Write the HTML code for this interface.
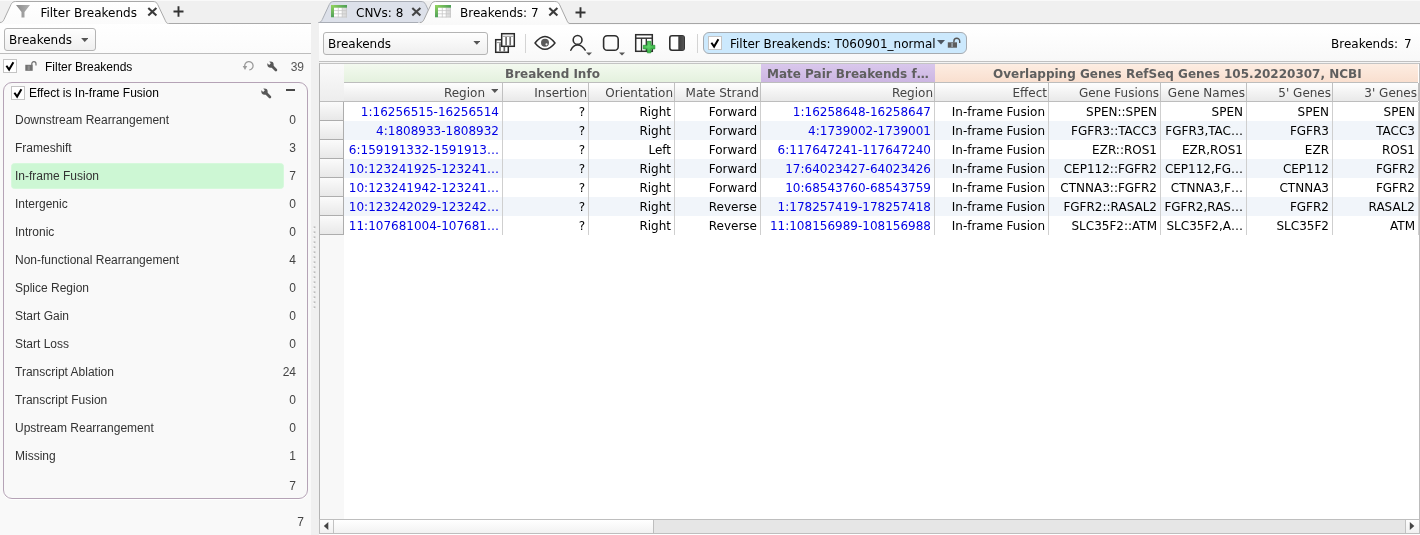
<!DOCTYPE html>
<html>
<head>
<meta charset="utf-8">
<title>Filter Breakends</title>
<style>
html,body{margin:0;padding:0;}
body{width:1420px;height:535px;overflow:hidden;position:relative;background:#f0f0f0;
 font-family:"DejaVu Sans","Liberation Sans",sans-serif;font-size:12px;color:#000;}
.a{position:absolute;white-space:nowrap;}
.lib{font-family:"Liberation Sans",sans-serif;}
.t{position:absolute;white-space:nowrap;line-height:16px;height:16px;}
/* left panel */
#lp{left:0;top:23px;width:311px;height:512px;background:#f9f9f9;}
#lptop{left:0;top:23px;width:311px;height:30px;background:linear-gradient(#ffffff,#fbfbfb);}
.li{left:15px;color:#333;font-family:"Liberation Sans",sans-serif;}
.ln{right:1124px;color:#444;font-family:"Liberation Sans",sans-serif;text-align:right;}
/* table */
.hc{position:absolute;top:85px;height:16px;line-height:17px;text-align:right;color:#444;box-sizing:border-box;white-space:nowrap;overflow:hidden;}
.gt{font-weight:bold;color:#5f5f5f;}
.row{position:absolute;left:344px;width:1074px;height:19px;}
.row.alt{background:#f1f5fa;}
.c{position:absolute;top:1px;height:18px;line-height:19px;text-align:right;white-space:nowrap;overflow:hidden;box-sizing:border-box;padding-right:3px;}
.lnk{color:#0000e6;}
.vl{position:absolute;top:102px;height:133px;width:1px;background:#cfcfcf;}
.rh{position:absolute;left:320px;width:23px;height:18px;background:linear-gradient(#fbfbfb,#e8e8e8);border-right:1px solid #adadad;border-bottom:1px solid #adadad;box-sizing:content-box;}
</style>
</head>
<body>
<div id="all" style="position:absolute;left:0;top:0;width:1420px;height:535px;will-change:transform;">
<!-- ================= LEFT PANEL ================= -->
<div class="a" id="lp"></div>
<div class="a" id="lptop"></div>
<!-- left tab bar -->
<svg class="a" style="left:0;top:0" width="320" height="24" viewBox="0 0 320 24">
 <defs><linearGradient id="tg" x1="0" y1="0" x2="0" y2="1"><stop offset="0" stop-color="#ffffff"/><stop offset="1" stop-color="#fbfbfb"/></linearGradient></defs>
 <path d="M0 22.5 C2 22.5 3 21.5 4 19.5 L11 4.5 C12 2.5 13.2 1.5 15.7 1.5 L153 1.5 C155.5 1.5 156.7 2.5 157.7 4.5 L165.3 20.5 C166.2 22.5 166.8 23.5 168.5 23.5 L311 23.5 L311 24 L0 24 Z" fill="url(#tg)"/>
 <path d="M0 22.5 C2 22.5 3 21.5 4 19.5 L11 4.5 C12 2.5 13.2 1.5 15.7 1.5 L153 1.5 C155.5 1.5 156.7 2.5 157.7 4.5 L165.3 20.5 C166.2 22.5 166.8 23.5 168.5 23.5 L311 23.5" fill="none" stroke="#a9a9a9" stroke-width="1"/>
 <!-- funnel icon -->
 <defs><linearGradient id="fg" x1="0" y1="0" x2="1" y2="0"><stop offset="0" stop-color="#8a8a8a"/><stop offset="1" stop-color="#b4b4b4"/></linearGradient></defs>
 <path d="M16 5 L30 5 L24.5 12 L24.5 17.5 L21.5 17.5 L21.5 12 Z" fill="url(#fg)"/>
</svg>
<div class="t" style="left:40.4px;top:5px;">Filter Breakends</div>
<svg class="a" style="left:146.6px;top:7.3px" width="11" height="10" viewBox="0 0 11 10"><path d="M1.3 1.1 L9.4 8.6 M9.4 1.1 L1.3 8.6" stroke="#3a3a3a" stroke-width="2.1" fill="none"/></svg>
<svg class="a" style="left:173.4px;top:6.4px" width="11" height="11" viewBox="0 0 11 11"><path d="M5.5 0.3 V10.7 M0.5 5.5 H10.5" stroke="#333" stroke-width="1.9" fill="none"/></svg>

<!-- Breakends dropdown button -->
<div class="a" style="left:4px;top:28px;width:92px;height:23px;box-sizing:border-box;border:1px solid #b4b4b4;border-radius:3px;background:linear-gradient(#fefefe,#efefef);"></div>
<div class="t" style="left:9px;top:32px;">Breakends</div>
<svg class="a" style="left:80.5px;top:37.5px" width="7.5" height="4.5" viewBox="0 0 8 5"><path d="M0 0 H8 L4 4.5 Z" fill="#555"/></svg>
<div class="a" style="left:0;top:53px;width:311px;height:1px;background:#bdbdbd;"></div>

<!-- Filter Breakends row -->
<div class="a" style="left:3px;top:59px;width:14px;height:14px;box-sizing:border-box;border:1px solid #c4c4c4;background:#fff;"></div>
<svg class="a" style="left:3px;top:59px" width="14" height="14" viewBox="0 0 14 14"><path d="M3.4 6.7 L6.1 10.6 L10.4 3.3" stroke="#000" stroke-width="2" fill="none"/></svg>
<svg class="a" style="left:24px;top:60px" width="14" height="12" viewBox="0 0 14 12"><rect x="1.3" y="4.8" width="7.4" height="6" fill="#707070"/><rect x="3.6" y="5.6" width="2.2" height="4.6" fill="#8e8e8e"/><path d="M7.8 5 V3.8 C7.8 0.9 12 0.9 12 3.8 V5.6" stroke="#707070" stroke-width="1.2" fill="none"/></svg>
<div class="t lib" style="left:45px;top:59px;color:#000;">Filter Breakends</div>
<svg class="a" style="left:241px;top:59px" width="14" height="14" viewBox="241 59 14 14"><path d="M244.7 66.2 A4.2 4.2 0 1 1 249.3 69.95" stroke="#9a9a9a" stroke-width="1.3" fill="none"/><path d="M242.7 66 H247.2 L245 69.9 Z" fill="#9a9a9a"/></svg>
<svg class="a" style="left:267px;top:61px" width="12" height="12" viewBox="0 0 12 12"><path d="M4.2 4.3 L8.9 9.0" stroke="#585858" stroke-width="2.7" stroke-linecap="round" fill="none"/><circle cx="3.5" cy="3.6" r="3.15" fill="#585858"/><path d="M3.0 3.1 L-1 -0.9" stroke="#f9f9f9" stroke-width="2.3" fill="none"/></svg>
<div class="t lib" style="left:280px;width:24px;text-align:right;top:59px;color:#555;">39</div>

<!-- card -->
<div class="a" style="left:3px;top:82px;width:305px;height:417px;box-sizing:border-box;border:1px solid #b5a3b6;border-radius:9px;background:#f9f9f9;box-shadow:0 1px 0 #fff;"></div>
<div class="a" style="left:11px;top:86px;width:14px;height:14px;box-sizing:border-box;border:1px solid #c4c4c4;background:#fff;"></div>
<svg class="a" style="left:11px;top:86px" width="14" height="14" viewBox="0 0 14 14"><path d="M3.4 6.7 L6.1 10.6 L10.4 3.3" stroke="#000" stroke-width="2" fill="none"/></svg>
<div class="t lib" style="left:29px;top:85px;">Effect is In-frame Fusion</div>
<svg class="a" style="left:260.8px;top:88px" width="12" height="12" viewBox="0 0 12 12"><path d="M4.2 4.3 L8.9 9.0" stroke="#585858" stroke-width="2.7" stroke-linecap="round" fill="none"/><circle cx="3.5" cy="3.6" r="3.15" fill="#585858"/><path d="M3.0 3.1 L-1 -0.9" stroke="#f9f9f9" stroke-width="2.3" fill="none"/></svg>
<div class="a" style="left:285.5px;top:88.5px;width:9px;height:2px;background:#484848;"></div>

<div class="a" style="left:11px;top:163px;width:273px;height:25.5px;box-sizing:border-box;background:#cdf7d4;border:1px solid #d6f9dc;border-radius:3.5px;"></div>
<div class="t li" style="top:112px;">Downstream Rearrangement</div><div class="t ln" style="top:112px;">0</div>
<div class="t li" style="top:140px;">Frameshift</div><div class="t ln" style="top:140px;">3</div>
<div class="t li" style="top:168px;">In-frame Fusion</div><div class="t ln" style="top:168px;">7</div>
<div class="t li" style="top:196px;">Intergenic</div><div class="t ln" style="top:196px;">0</div>
<div class="t li" style="top:224px;">Intronic</div><div class="t ln" style="top:224px;">0</div>
<div class="t li" style="top:252px;">Non-functional Rearrangement</div><div class="t ln" style="top:252px;">4</div>
<div class="t li" style="top:280px;">Splice Region</div><div class="t ln" style="top:280px;">0</div>
<div class="t li" style="top:308px;">Start Gain</div><div class="t ln" style="top:308px;">0</div>
<div class="t li" style="top:336px;">Start Loss</div><div class="t ln" style="top:336px;">0</div>
<div class="t li" style="top:364px;">Transcript Ablation</div><div class="t ln" style="top:364px;">24</div>
<div class="t li" style="top:392px;">Transcript Fusion</div><div class="t ln" style="top:392px;">0</div>
<div class="t li" style="top:420px;">Upstream Rearrangement</div><div class="t ln" style="top:420px;">0</div>
<div class="t li" style="top:448px;">Missing</div><div class="t ln" style="top:448px;">1</div>
<div class="t ln" style="top:478px;">7</div>
<div class="t ln" style="top:514px;right:1116px;">7</div>

<!-- splitter -->
<div class="a" style="left:311px;top:0;width:8px;height:535px;background:#f0f0f0;"></div>
<div class="a" style="left:0;top:0;width:1420px;height:1px;background:#f9f9f9;"></div>
<div class="a" style="left:319px;top:534px;width:1101px;height:1px;background:#f4f4f4;"></div>
<svg class="a" style="left:312px;top:226px" width="6" height="86" viewBox="0 0 6 86"><rect x="1" y="1" width="2" height="2" fill="#fff"/><rect x="1.6" y="0.4" width="1.8" height="1.8" fill="#bcbcbc"/><rect x="1" y="6" width="2" height="2" fill="#fff"/><rect x="1.6" y="5.4" width="1.8" height="1.8" fill="#bcbcbc"/><rect x="1" y="11" width="2" height="2" fill="#fff"/><rect x="1.6" y="10.4" width="1.8" height="1.8" fill="#bcbcbc"/><rect x="1" y="16" width="2" height="2" fill="#fff"/><rect x="1.6" y="15.4" width="1.8" height="1.8" fill="#bcbcbc"/><rect x="1" y="21" width="2" height="2" fill="#fff"/><rect x="1.6" y="20.4" width="1.8" height="1.8" fill="#bcbcbc"/><rect x="1" y="26" width="2" height="2" fill="#fff"/><rect x="1.6" y="25.4" width="1.8" height="1.8" fill="#bcbcbc"/><rect x="1" y="31" width="2" height="2" fill="#fff"/><rect x="1.6" y="30.4" width="1.8" height="1.8" fill="#bcbcbc"/><rect x="1" y="36" width="2" height="2" fill="#fff"/><rect x="1.6" y="35.4" width="1.8" height="1.8" fill="#bcbcbc"/><rect x="1" y="41" width="2" height="2" fill="#fff"/><rect x="1.6" y="40.4" width="1.8" height="1.8" fill="#bcbcbc"/><rect x="1" y="46" width="2" height="2" fill="#fff"/><rect x="1.6" y="45.4" width="1.8" height="1.8" fill="#bcbcbc"/><rect x="1" y="51" width="2" height="2" fill="#fff"/><rect x="1.6" y="50.4" width="1.8" height="1.8" fill="#bcbcbc"/><rect x="1" y="56" width="2" height="2" fill="#fff"/><rect x="1.6" y="55.4" width="1.8" height="1.8" fill="#bcbcbc"/><rect x="1" y="61" width="2" height="2" fill="#fff"/><rect x="1.6" y="60.4" width="1.8" height="1.8" fill="#bcbcbc"/><rect x="1" y="66" width="2" height="2" fill="#fff"/><rect x="1.6" y="65.4" width="1.8" height="1.8" fill="#bcbcbc"/><rect x="1" y="71" width="2" height="2" fill="#fff"/><rect x="1.6" y="70.4" width="1.8" height="1.8" fill="#bcbcbc"/><rect x="1" y="76" width="2" height="2" fill="#fff"/><rect x="1.6" y="75.4" width="1.8" height="1.8" fill="#bcbcbc"/><rect x="1" y="81" width="2" height="2" fill="#fff"/><rect x="1.6" y="80.4" width="1.8" height="1.8" fill="#bcbcbc"/></svg>

<!-- ================= RIGHT PANEL ================= -->
<div class="a" id="rp" style="left:319px;top:23px;width:1101px;height:512px;background:#fff;"></div>
<div class="a" style="left:319px;top:24px;width:1101px;height:37px;background:linear-gradient(#ffffff 15%,#f8f8f8);"></div>

<!-- right tab bar -->
<svg class="a" style="left:311px;top:0" width="1109" height="25" viewBox="311 0 1109 25">
 <defs><linearGradient id="tg2" x1="0" y1="0" x2="0" y2="1"><stop offset="0" stop-color="#ffffff"/><stop offset="1" stop-color="#f9f9f9"/></linearGradient></defs>
 <path d="M318.5 22.5 C320.5 22.5 321.3 21.5 322.3 19.5 L329.3 4.5 C330.3 2.5 331.5 1.5 334 1.5 L421 1.5 C423.5 1.5 424.7 2.5 425.7 4.5 L434 22.5 Z" fill="#dde1ea" stroke="#a9adb5" stroke-width="1"/>
 <path d="M418 25 L418 22.5 L420 22.5 C422 22.5 423 21.5 424 19.5 L431 4.5 C432 2.5 433.2 1.5 435.7 1.5 L554.8 1.5 C557.3 1.5 558.5 2.5 559.5 4.5 L566.9 20.5 C567.8 22.5 568.4 23.5 570 23.5 L1420 23.5 L1420 25 Z" fill="url(#tg2)"/>
 <path d="M420 22.5 C422 22.5 423 21.5 424 19.5 L431 4.5 C432 2.5 433.2 1.5 435.7 1.5 L554.8 1.5 C557.3 1.5 558.5 2.5 559.5 4.5 L566.9 20.5 C567.8 22.5 568.4 23.5 570 23.5 L1420 23.5" fill="none" stroke="#a6a6a6" stroke-width="1"/>
</svg>
<!-- table icons -->
<svg class="a" style="left:331px;top:5px" width="16" height="13" viewBox="0 0 16 13"><defs><linearGradient id="ih" x1="0" y1="0" x2="1" y2="0"><stop offset="0" stop-color="#93d45e"/><stop offset="1" stop-color="#4d9e55"/></linearGradient><linearGradient id="iv" x1="0" y1="0" x2="0" y2="1"><stop offset="0" stop-color="#93d45e"/><stop offset="1" stop-color="#4fa05a"/></linearGradient><linearGradient id="is" x1="0" y1="0" x2="1" y2="0"><stop offset="0" stop-color="#fff"/><stop offset="1" stop-color="#d6d6d6"/></linearGradient></defs><rect x="0" y="0" width="16" height="12.3" fill="url(#is)"/><rect x="3" y="2.6" width="8" height="9.4" fill="#fff"/><path d="M7.3 2.6 V12.3 M11.2 2.6 V12.3 M15.6 2.6 V12.3 M3 5.6 H16 M3 8.8 H16 M3 12 H16" stroke="#c6c6c6" stroke-width="0.8" fill="none"/><rect x="0" y="0" width="16" height="2.7" fill="url(#ih)"/><rect x="0" y="0" width="3" height="12.3" fill="url(#iv)"/></svg>
<div class="t" style="left:356px;top:5px;">CNVs: 8</div>
<svg class="a" style="left:410.6px;top:7.3px" width="11" height="10" viewBox="0 0 11 10"><path d="M1.3 1.1 L9.4 8.6 M9.4 1.1 L1.3 8.6" stroke="#444" stroke-width="2.1" fill="none"/></svg>
<svg class="a" style="left:435px;top:5px" width="16" height="13" viewBox="0 0 16 13"><defs><linearGradient id="ih" x1="0" y1="0" x2="1" y2="0"><stop offset="0" stop-color="#93d45e"/><stop offset="1" stop-color="#4d9e55"/></linearGradient><linearGradient id="iv" x1="0" y1="0" x2="0" y2="1"><stop offset="0" stop-color="#93d45e"/><stop offset="1" stop-color="#4fa05a"/></linearGradient><linearGradient id="is" x1="0" y1="0" x2="1" y2="0"><stop offset="0" stop-color="#fff"/><stop offset="1" stop-color="#d6d6d6"/></linearGradient></defs><rect x="0" y="0" width="16" height="12.3" fill="url(#is)"/><rect x="3" y="2.6" width="8" height="9.4" fill="#fff"/><path d="M7.3 2.6 V12.3 M11.2 2.6 V12.3 M15.6 2.6 V12.3 M3 5.6 H16 M3 8.8 H16 M3 12 H16" stroke="#c6c6c6" stroke-width="0.8" fill="none"/><rect x="0" y="0" width="16" height="2.7" fill="url(#ih)"/><rect x="0" y="0" width="3" height="12.3" fill="url(#iv)"/></svg>
<div class="t" style="left:460px;top:5px;">Breakends: 7</div>
<svg class="a" style="left:547.6px;top:7.3px" width="11" height="10" viewBox="0 0 11 10"><path d="M1.3 1.1 L9.4 8.6 M9.4 1.1 L1.3 8.6" stroke="#3a3a3a" stroke-width="2.1" fill="none"/></svg>
<svg class="a" style="left:574.6px;top:6.5px" width="11" height="11" viewBox="0 0 11 11"><path d="M5.5 0.3 V10.7 M0.5 5.5 H10.5" stroke="#333" stroke-width="1.9" fill="none"/></svg>

<!-- toolbar -->
<div class="a" style="left:323px;top:32px;width:165px;height:23px;box-sizing:border-box;border:1px solid #b4b4b4;border-radius:3px;background:linear-gradient(#fefefe,#efefef);"></div>
<div class="t" style="left:328px;top:36px;">Breakends</div>
<svg class="a" style="left:472.8px;top:41.2px" width="7.6" height="4.3" viewBox="0 0 8 5"><path d="M0 0 H8 L4 4.5 Z" fill="#555"/></svg>
<!-- TOOLBAR ICONS -->
<!-- stacked tables icon -->
<svg class="a" style="left:494px;top:32px" width="22" height="22" viewBox="494 32 22 22">
 <rect x="495.7" y="39.7" width="12.6" height="12.6" fill="#fff" stroke="#2a2a2a" stroke-width="1.5"/>
 <path d="M496.4 42.6 H507.6" stroke="#8a8a8a" stroke-width="0.9"/>
 <path d="M500 43.2 V51.6 M504.3 43.2 V51.6" stroke="#6a6a6a" stroke-width="1.7"/>
 <rect x="501.7" y="33.7" width="12.6" height="12.6" fill="#fff" stroke="#2a2a2a" stroke-width="1.5"/>
 <path d="M502.4 36.3 H513.6" stroke="#8a8a8a" stroke-width="0.9"/>
 <path d="M506.1 37 V45.6 M510.2 37 V45.6" stroke="#6e6e6e" stroke-width="1.7"/>
</svg>
<div class="a" style="left:525px;top:34px;width:1px;height:19px;background:#d4d4d4;"></div>
<!-- eye icon -->
<svg class="a" style="left:532px;top:33px" width="26" height="20" viewBox="532 33 26 20">
 <path d="M535 43 C539 37.8 542 36.4 545 36.4 C548 36.4 551 37.8 555 43 C551 48 548 49.3 545 49.3 C542 49.3 539 48 535 43 Z" fill="#fff" stroke="#2e2e2e" stroke-width="1.5" stroke-linejoin="round"/>
 <circle cx="545" cy="42.8" r="4" fill="#5a5a5a"/>
 <circle cx="546.5" cy="44.3" r="1.1" fill="#f0f0f0"/>
</svg>
<!-- person icon -->
<svg class="a" style="left:568px;top:33px" width="26" height="24" viewBox="568 33 26 24">
 <circle cx="577.6" cy="39.9" r="4.4" fill="none" stroke="#2e2e2e" stroke-width="1.6"/>
 <path d="M570.8 50.2 C572.5 46.2 575 44.9 577.5 44.9 C580 44.9 583 46.2 585.2 50.2" fill="none" stroke="#2e2e2e" stroke-width="1.5" stroke-linecap="round"/>
 <path d="M586 52.4 H592 L589 55.4 Z" fill="#555"/>
</svg>
<!-- rounded square icon -->
<svg class="a" style="left:601px;top:33px" width="26" height="24" viewBox="601 33 26 24">
 <rect x="603.6" y="35.7" width="14.6" height="14.6" rx="3.6" fill="none" stroke="#2e2e2e" stroke-width="1.6"/>
 <path d="M619 52.4 H625 L622 55.4 Z" fill="#555"/>
</svg>
<!-- table plus icon -->
<svg class="a" style="left:633px;top:32px" width="24" height="23" viewBox="633 32 24 23">
 <rect x="635.7" y="34.7" width="16.6" height="16.6" fill="#fff" stroke="#2e2e2e" stroke-width="1.5"/>
 <path d="M636 38.2 H652" stroke="#2e2e2e" stroke-width="1.4"/>
 <path d="M641.5 38.5 V51 M646.3 38.5 V51" stroke="#2e2e2e" stroke-width="1.3"/>
 <path d="M647.3 41.3 H650.9 V45.3 H654.8 V48.9 H650.9 V52.8 H647.3 V48.9 H643.3 V45.3 H647.3 Z" fill="url(#pg)" stroke="#2a9a37" stroke-width="0.8" stroke-linejoin="round"/>
 <defs><radialGradient id="pg" cx="0.45" cy="0.4" r="0.6"><stop offset="0" stop-color="#62d36c"/><stop offset="1" stop-color="#35b043"/></radialGradient></defs>
</svg>
<!-- half square icon -->
<svg class="a" style="left:667px;top:33px" width="20" height="20" viewBox="667 33 20 20">
 <defs><linearGradient id="hg" x1="0" y1="0" x2="1" y2="0"><stop offset="0" stop-color="#3a3a3a"/><stop offset="1" stop-color="#555"/></linearGradient></defs>
 <rect x="669.8" y="35.8" width="14.4" height="14.4" rx="2.2" fill="#fff" stroke="#2e2e2e" stroke-width="1.6"/>
 <path d="M678.3 35.8 H682 Q684.2 35.8 684.2 38 V48 Q684.2 50.2 682 50.2 H678.3 Z" fill="url(#hg)"/>
</svg>
<div class="a" style="left:697px;top:34px;width:1px;height:19px;background:#d4d4d4;"></div>
<!-- /TOOLBAR ICONS -->

<!-- filter pill -->
<div class="a" style="left:703px;top:32px;width:264px;height:22px;box-sizing:border-box;border:1px solid #a6abb0;border-radius:6px;background:#cce9fd;"></div>
<div class="a" style="left:708px;top:36px;width:14px;height:14px;box-sizing:border-box;border:1px solid #c4c4c4;background:#fff;"></div>
<svg class="a" style="left:708px;top:36px" width="14" height="14" viewBox="0 0 14 14"><path d="M3.4 6.7 L6.1 10.6 L10.4 3.3" stroke="#000" stroke-width="2" fill="none"/></svg>
<div class="t" style="left:730px;top:36px;">Filter Breakends: T060901_normal</div>
<svg class="a" style="left:937px;top:40px" width="8" height="5" viewBox="0 0 8 5"><path d="M0 0 H8 L4 4.5 Z" fill="#4c5660"/></svg>
<svg class="a" style="left:947px;top:37px" width="15" height="12" viewBox="0 0 15 12"><rect x="0.8" y="5.3" width="9.2" height="5.4" fill="#5e5e5e"/><rect x="4.3" y="6" width="1.6" height="4" fill="#9aa4ac"/><path d="M6.9 5.6 V4.2 C6.9 0.3 12.7 0.3 12.7 4.2 V5.9" stroke="#555" stroke-width="1.4" fill="none"/></svg>
<div class="t" style="left:1331px;top:36px;">Breakends:</div><div class="t" style="left:1404px;top:36px;">7</div>

<!-- table -->
<div class="a" style="left:319px;top:61px;width:1101px;height:1px;background:#c0c0c0;"></div>
<div class="a" style="left:319px;top:62px;width:1101px;height:1px;background:#f4f4f4;"></div>
<div class="a" style="left:319px;top:63px;width:1101px;height:1px;background:#c4c4c4;"></div>
<div class="a" style="left:1419px;top:63px;width:1px;height:456px;background:#bcbcbc;"></div>
<div class="a" style="left:320px;top:64px;width:24px;height:37px;background:linear-gradient(#fafafa,#ededed);"></div>
<div class="a" style="left:319px;top:63px;width:1px;height:470px;background:#b4b4b4;"></div>
<div class="a" style="left:320px;top:235px;width:24px;height:284px;background:#f8f8f8;"></div>
<!-- TABLE BODY -->
<div class="a" style="left:344px;top:64px;width:417px;height:18px;background:linear-gradient(#f3f9ef,#e4f1de);"></div>
<div class="a" style="left:761px;top:64px;width:174px;height:18px;background:linear-gradient(#d9c7ec,#ccb6e2);"></div>
<div class="a" style="left:935px;top:64px;width:483px;height:18px;background:linear-gradient(#fdede2,#f9dfcf);"></div>
<div class="a" style="left:344px;top:82px;width:1074px;height:1px;background:#bdbdbd;"></div>
<div class="t gt" style="left:505px;top:66px;">Breakend Info</div>
<div class="t gt" style="left:767px;top:66px;">Mate Pair Breakends f…</div>
<div class="t gt" style="left:993px;top:66px;">Overlapping Genes RefSeq Genes 105.20220307, NCBI</div>
<div class="a" style="left:344px;top:83px;width:1074px;height:18px;background:linear-gradient(#fefefe,#e9e9e9);"></div>
<div class="a" style="left:320px;top:101px;width:1098px;height:1px;background:#bdbdbd;"></div>
<div class="hc" style="left:344px;width:158px;padding-right:17px;">Region</div>
<div class="a" style="left:502px;top:83px;width:1px;height:18px;background:#c0c0c0;"></div>
<div class="hc" style="left:503px;width:85px;padding-right:1px;">Insertion</div>
<div class="a" style="left:588px;top:83px;width:1px;height:18px;background:#c0c0c0;"></div>
<div class="hc" style="left:589px;width:85px;padding-right:1px;">Orientation</div>
<div class="a" style="left:674px;top:83px;width:1px;height:18px;background:#c0c0c0;"></div>
<div class="hc" style="left:675px;width:85px;padding-right:1px;">Mate Strand</div>
<div class="a" style="left:760px;top:83px;width:1px;height:18px;background:#c0c0c0;"></div>
<div class="hc" style="left:761px;width:173px;padding-right:1px;">Region</div>
<div class="a" style="left:934px;top:83px;width:1px;height:18px;background:#c0c0c0;"></div>
<div class="hc" style="left:935px;width:113px;padding-right:1px;">Effect</div>
<div class="a" style="left:1048px;top:83px;width:1px;height:18px;background:#c0c0c0;"></div>
<div class="hc" style="left:1049px;width:111px;padding-right:1px;">Gene Fusions</div>
<div class="a" style="left:1160px;top:83px;width:1px;height:18px;background:#c0c0c0;"></div>
<div class="hc" style="left:1161px;width:85px;padding-right:1px;">Gene Names</div>
<div class="a" style="left:1246px;top:83px;width:1px;height:18px;background:#c0c0c0;"></div>
<div class="hc" style="left:1247px;width:85px;padding-right:1px;">5' Genes</div>
<div class="a" style="left:1332px;top:83px;width:1px;height:18px;background:#c0c0c0;"></div>
<div class="hc" style="left:1333px;width:85px;padding-right:1px;">3' Genes</div>
<div class="a" style="left:1418px;top:83px;width:1px;height:18px;background:#c0c0c0;"></div>
<svg class="a" style="left:490.5px;top:89px" width="7.5" height="4.5" viewBox="0 0 8 5"><path d="M0 0 H8 L4 4.5 Z" fill="#555"/></svg>
<div class="rh" style="top:102px;"></div>
<div class="row" style="top:102px;"><div class="c lnk" style="left:0px;width:158px;">1:16256515-16256514</div><div class="c" style="left:159px;width:85px;">?</div><div class="c" style="left:245px;width:85px;">Right</div><div class="c" style="left:331px;width:85px;">Forward</div><div class="c lnk" style="left:417px;width:173px;">1:16258648-16258647</div><div class="c" style="left:591px;width:113px;">In-frame Fusion</div><div class="c" style="left:705px;width:111px;">SPEN::SPEN</div><div class="c" style="left:817px;width:85px;">SPEN</div><div class="c" style="left:903px;width:85px;">SPEN</div><div class="c" style="left:989px;width:85px;">SPEN</div></div>
<div class="rh" style="top:121px;"></div>
<div class="row alt" style="top:121px;"><div class="c lnk" style="left:0px;width:158px;">4:1808933-1808932</div><div class="c" style="left:159px;width:85px;">?</div><div class="c" style="left:245px;width:85px;">Right</div><div class="c" style="left:331px;width:85px;">Forward</div><div class="c lnk" style="left:417px;width:173px;">4:1739002-1739001</div><div class="c" style="left:591px;width:113px;">In-frame Fusion</div><div class="c" style="left:705px;width:111px;">FGFR3::TACC3</div><div class="c" style="left:817px;width:85px;">FGFR3,TAC…</div><div class="c" style="left:903px;width:85px;">FGFR3</div><div class="c" style="left:989px;width:85px;">TACC3</div></div>
<div class="rh" style="top:140px;"></div>
<div class="row" style="top:140px;"><div class="c lnk" style="left:0px;width:158px;">6:159191332-1591913…</div><div class="c" style="left:159px;width:85px;">?</div><div class="c" style="left:245px;width:85px;">Left</div><div class="c" style="left:331px;width:85px;">Forward</div><div class="c lnk" style="left:417px;width:173px;">6:117647241-117647240</div><div class="c" style="left:591px;width:113px;">In-frame Fusion</div><div class="c" style="left:705px;width:111px;">EZR::ROS1</div><div class="c" style="left:817px;width:85px;">EZR,ROS1</div><div class="c" style="left:903px;width:85px;">EZR</div><div class="c" style="left:989px;width:85px;">ROS1</div></div>
<div class="rh" style="top:159px;"></div>
<div class="row alt" style="top:159px;"><div class="c lnk" style="left:0px;width:158px;">10:123241925-123241…</div><div class="c" style="left:159px;width:85px;">?</div><div class="c" style="left:245px;width:85px;">Right</div><div class="c" style="left:331px;width:85px;">Forward</div><div class="c lnk" style="left:417px;width:173px;">17:64023427-64023426</div><div class="c" style="left:591px;width:113px;">In-frame Fusion</div><div class="c" style="left:705px;width:111px;">CEP112::FGFR2</div><div class="c" style="left:817px;width:85px;">CEP112,FG…</div><div class="c" style="left:903px;width:85px;">CEP112</div><div class="c" style="left:989px;width:85px;">FGFR2</div></div>
<div class="rh" style="top:178px;"></div>
<div class="row" style="top:178px;"><div class="c lnk" style="left:0px;width:158px;">10:123241942-123241…</div><div class="c" style="left:159px;width:85px;">?</div><div class="c" style="left:245px;width:85px;">Right</div><div class="c" style="left:331px;width:85px;">Forward</div><div class="c lnk" style="left:417px;width:173px;">10:68543760-68543759</div><div class="c" style="left:591px;width:113px;">In-frame Fusion</div><div class="c" style="left:705px;width:111px;">CTNNA3::FGFR2</div><div class="c" style="left:817px;width:85px;">CTNNA3,F…</div><div class="c" style="left:903px;width:85px;">CTNNA3</div><div class="c" style="left:989px;width:85px;">FGFR2</div></div>
<div class="rh" style="top:197px;"></div>
<div class="row alt" style="top:197px;"><div class="c lnk" style="left:0px;width:158px;">10:123242029-123242…</div><div class="c" style="left:159px;width:85px;">?</div><div class="c" style="left:245px;width:85px;">Right</div><div class="c" style="left:331px;width:85px;">Reverse</div><div class="c lnk" style="left:417px;width:173px;">1:178257419-178257418</div><div class="c" style="left:591px;width:113px;">In-frame Fusion</div><div class="c" style="left:705px;width:111px;">FGFR2::RASAL2</div><div class="c" style="left:817px;width:85px;">FGFR2,RAS…</div><div class="c" style="left:903px;width:85px;">FGFR2</div><div class="c" style="left:989px;width:85px;">RASAL2</div></div>
<div class="rh" style="top:216px;"></div>
<div class="row" style="top:216px;"><div class="c lnk" style="left:0px;width:158px;">11:107681004-107681…</div><div class="c" style="left:159px;width:85px;">?</div><div class="c" style="left:245px;width:85px;">Right</div><div class="c" style="left:331px;width:85px;">Reverse</div><div class="c lnk" style="left:417px;width:173px;">11:108156989-108156988</div><div class="c" style="left:591px;width:113px;">In-frame Fusion</div><div class="c" style="left:705px;width:111px;">SLC35F2::ATM</div><div class="c" style="left:817px;width:85px;">SLC35F2,A…</div><div class="c" style="left:903px;width:85px;">SLC35F2</div><div class="c" style="left:989px;width:85px;">ATM</div></div>
<div class="vl" style="left:502px;"></div>
<div class="vl" style="left:588px;"></div>
<div class="vl" style="left:674px;"></div>
<div class="vl" style="left:760px;"></div>
<div class="vl" style="left:934px;"></div>
<div class="vl" style="left:1048px;"></div>
<div class="vl" style="left:1160px;"></div>
<div class="vl" style="left:1246px;"></div>
<div class="vl" style="left:1332px;"></div>
<div class="vl" style="left:1418px;"></div>
<!-- /TABLE BODY -->

<!-- scrollbar -->
<!-- SCROLLBAR -->
<div class="a" style="left:319px;top:519px;width:1101px;height:15px;box-sizing:border-box;border:1px solid #bebebe;background:#e6e6e6;"></div>
<div class="a" style="left:320px;top:520px;width:13px;height:13px;background:linear-gradient(#fdfdfd,#f1f1f1);border-right:1px solid #c2c2c2;"></div>
<div class="a" style="left:334px;top:520px;width:319px;height:13px;background:linear-gradient(#ffffff,#f2f2f2);border-right:1px solid #bebebe;"></div>
<div class="a" style="left:1405px;top:520px;width:14px;height:13px;background:linear-gradient(#fdfdfd,#f1f1f1);border-left:1px solid #c2c2c2;box-sizing:border-box;"></div>
<svg class="a" style="left:323px;top:522px" width="6" height="8" viewBox="0 0 6 8"><path d="M5.3 0 V8 L0.8 4 Z" fill="#444"/></svg>
<svg class="a" style="left:1409px;top:522px" width="6" height="8" viewBox="0 0 6 8"><path d="M0.8 0 V8 L5.3 4 Z" fill="#444"/></svg>
<!-- /SCROLLBAR -->
</div>
</body>
</html>
